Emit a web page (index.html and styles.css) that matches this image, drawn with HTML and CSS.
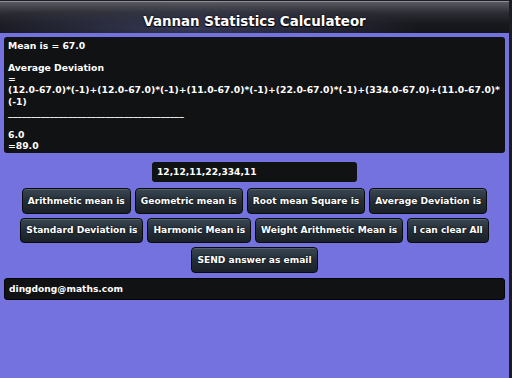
FILE: index.html
```html
<!DOCTYPE html>
<html lang="en">
<head>
    <meta charset="UTF-8">
    <meta name="viewport" content="width=device-width, initial-scale=1.0">
    <title>Vannan Statistics Calculateor</title>
    <link rel="stylesheet" href="styles.css">
</head>
<body>
    <div class="app">
        <header class="titlebar">
            <h1>Vannan Statistics Calculateor</h1>
        </header>

        <div class="content">
            <!-- Result of the last calculation -->
            <div class="output" id="output">Mean is = 67.0<br>
                <br>
                Average Deviation<br>
                =<br>
                (12.0-67.0)*(-1)+(12.0-67.0)*(-1)+(11.0-67.0)*(-1)+(22.0-67.0)*(-1)+(334.0-67.0)+(11.0-67.0)*<br>
                (-1)<br>
                ______________________________________<br>
                <br>
                6.0<br>
                =89.0</div>

            <input type="text" class="numbers" id="numbers" value="12,12,11,22,334,11">

            <div class="btn-row">
                <button>Arithmetic mean is</button>
                <button>Geometric mean is</button>
                <button>Root mean Square is</button>
                <button>Average Deviation is</button>
            </div>
            <div class="btn-row">
                <button>Standard Deviation is</button>
                <button>Harmonic Mean is</button>
                <button>Weight Arithmetic Mean is</button>
                <button>I can clear All</button>
            </div>
            <div class="btn-row">
                <button>SEND answer as email</button>
            </div>

            <input type="text" class="email" id="email" value="dingdong@maths.com">
        </div>
    </div>
</body>
</html>
```

FILE: styles.css
```css
body {
    margin: 0;
    padding: 0;
    background-color: #1d1d21;
    font-family: "DejaVu Sans", sans-serif;
    font-weight: bold;
}
.app {
    width: 509px;
    height: 378px;
    display: flex;
    flex-direction: column;
}
.titlebar {
    margin-top: 1px;
    height: 31px;
    border-top: 1px solid #8e8f96;
    background:
        radial-gradient(ellipse 45% 70% at 38% 85%, rgba(95, 100, 160, 0.45), rgba(95, 100, 160, 0) 100%),
        linear-gradient(#595a62, #2c2d34 35%, #18191e 70%, #141519);
    display: flex;
    justify-content: center;
    align-items: flex-end;
}
h1 {
    margin: 0 0 4px 0;
    font-size: 13.4px;
    color: #fff;
    text-shadow: 0 0 2px #000, 0 1px 1px #000;
}
.content {
    flex: 1;
    background-color: #7372df;
    padding: 4px 4px 0 4px;
    display: flex;
    flex-direction: column;
    align-items: center;
}
.output {
    align-self: stretch;
    background-color: #111214;
    border-radius: 3px;
    padding: 2.5px 4px 1.5px 4px;
    font-size: 9.25px;
    line-height: 11.2px;
    color: #fff;
    white-space: nowrap;
}
.numbers {
    margin-top: 9px;
    width: 205px;
    height: 20px;
    box-sizing: border-box;
    padding: 0 5px;
    border: none;
    border-radius: 3px;
    background-color: #111214;
    color: #fff;
    font-family: "DejaVu Sans", sans-serif;
    font-weight: bold;
    font-size: 9.1px;
    outline: none;
}
.btn-row {
    display: flex;
    gap: 4px;
    margin-top: 4px;
}
.numbers + .btn-row {
    margin-top: 6px;
}
button {
    height: 25.5px;
    padding: 0 5px;
    border: 1px solid #090b0d;
    border-radius: 4px;
    background: linear-gradient(#394753, #252e37 50%, #1a2127);
    box-shadow: inset 0 1px 0 rgba(255, 255, 255, 0.14);
    color: #fff;
    font-family: "DejaVu Sans", sans-serif;
    font-weight: bold;
    font-size: 9.1px;
    text-shadow: 0 0 2px #000;
    cursor: pointer;
}
.email {
    align-self: stretch;
    margin-top: 5px;
    height: 22px;
    box-sizing: border-box;
    padding: 0 4px;
    border: 1px solid #050506;
    border-radius: 3px;
    background-color: #111214;
    color: #fff;
    font-family: "DejaVu Sans", sans-serif;
    font-weight: bold;
    font-size: 9.1px;
    outline: none;
}
```
